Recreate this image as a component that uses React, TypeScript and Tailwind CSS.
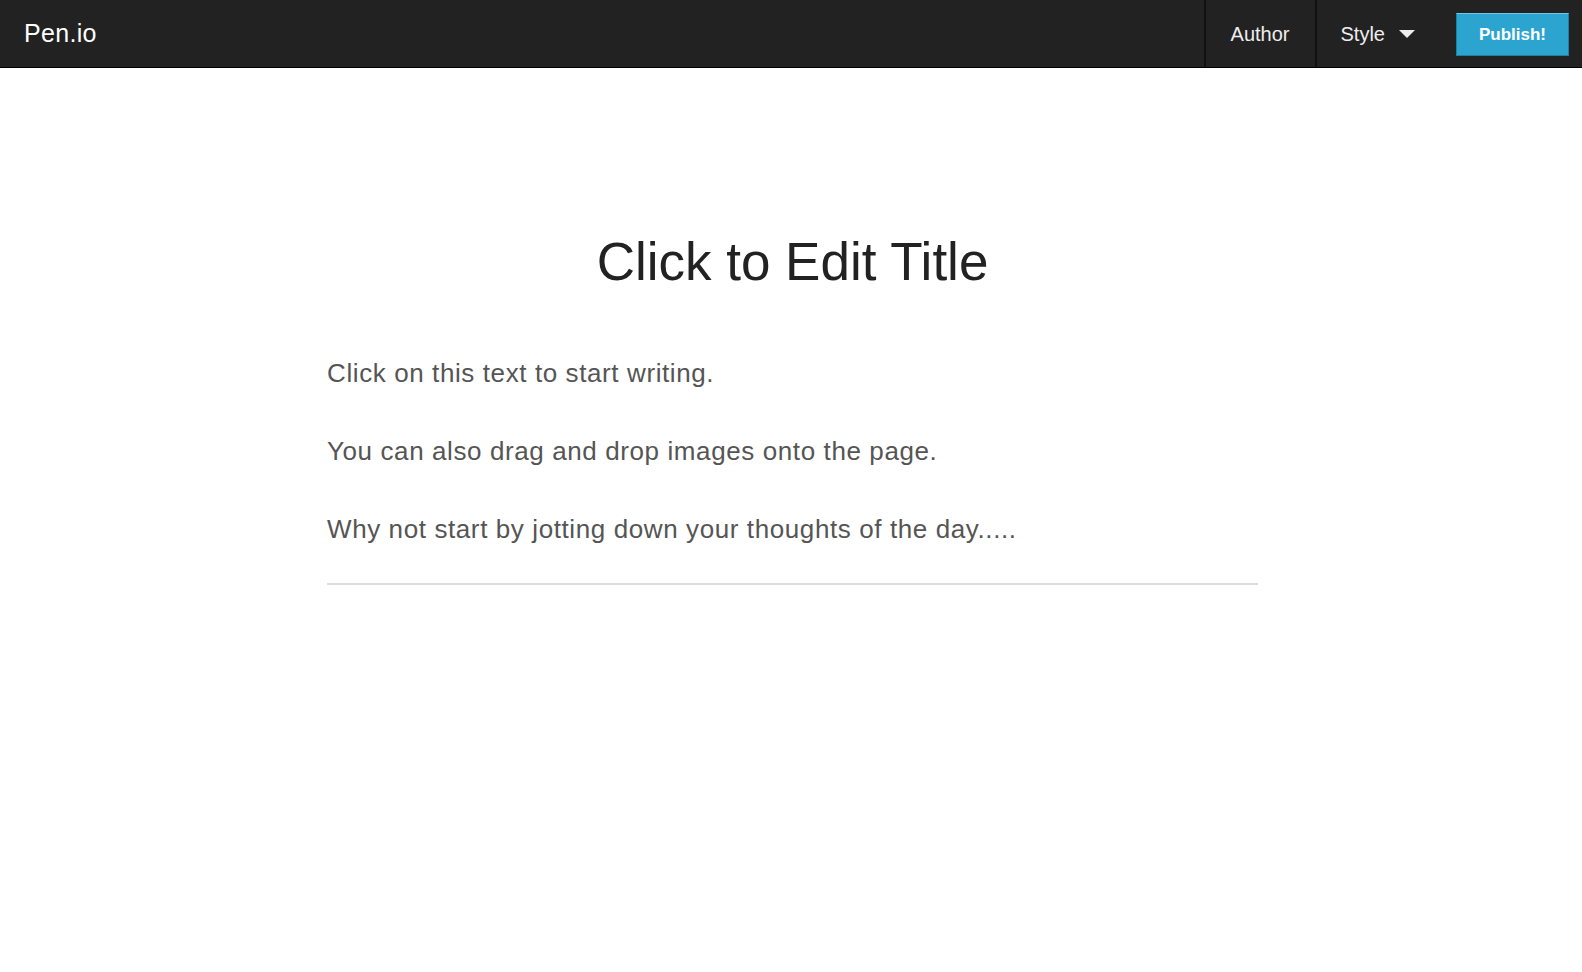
export default function App() {
	return (
		<div className="min-h-screen bg-white font-['Liberation_Sans',Arial,sans-serif]">
			<nav className="flex h-[68px] items-stretch border-b border-black bg-[#222222] text-white">
				<div className="flex items-center pl-6 text-[25px] tracking-[0.3px]">
					Pen.io
				</div>
				<div className="ml-auto flex items-stretch">
					<div className="flex items-center border-l-2 border-[#111111] px-[25px] text-[20px] text-[#eeeeee]">
						Author
					</div>
					<div className="flex items-center gap-[14px] border-l-2 border-[#111111] pl-[24px] pr-[41px] text-[20px] text-[#eeeeee]">
						Style
						<span className="mt-[1px] h-0 w-0 border-x-[8px] border-t-[8px] border-x-transparent border-t-[#eeeeee]" />
					</div>
					<div className="flex items-center pr-[13px]">
						<button
							type="button"
							className="mt-[1px] h-[43px] w-[113px] border border-[#1f7fa3] border-t-[#6cc8e6] bg-[#2ba5d0] pt-[1px] text-[17px] font-bold text-white"
						>
							Publish!
						</button>
					</div>
				</div>
			</nav>

			<main className="mx-auto w-[934px] pl-[3px] pt-[163px]">
				<h1 className="text-center text-[53px] leading-[62px] text-[#222222]">
					Click to Edit Title
				</h1>
				<div className="mt-[61px] text-[26px] leading-[39px] tracking-[0.6px] text-[#555555]">
					<p>Click on this text to start writing.</p>
					<p className="mt-[39px]">
						You can also drag and drop images onto the page.
					</p>
					<p className="mt-[39px]">
						Why not start by jotting down your thoughts of the day.....
					</p>
				</div>
				<hr className="mt-[34px] border-t-2 border-[#dddddd]" />
			</main>
		</div>
	);
}
